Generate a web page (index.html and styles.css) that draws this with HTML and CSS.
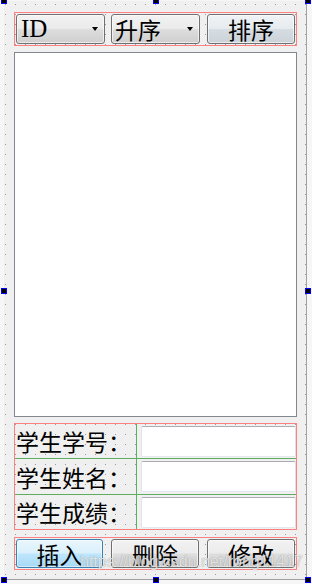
FILE: index.html
```html
<!DOCTYPE html>
<html lang="zh-CN">
<head>
    <meta charset="UTF-8">
    <meta name="viewport" content="width=device-width, initial-scale=1.0">
    <title>学生信息</title>
    <link rel="stylesheet" href="styles.css">
</head>
<body>
    <div class="form">
        <div class="layout toolbar">
            <div class="combo combo-id"><span>ID</span><i class="arrow"></i></div>
            <div class="combo combo-order"><span>升序</span><i class="arrow"></i></div>
            <button class="btn btn-sort">排序</button>
        </div>

        <div class="list"></div>

        <div class="layout grid">
            <div class="row">
                <label class="cell-label">学生学号：</label>
                <div class="cell-input"><input class="line-edit" type="text"></div>
            </div>
            <div class="row">
                <label class="cell-label">学生姓名：</label>
                <div class="cell-input"><input class="line-edit" type="text"></div>
            </div>
            <div class="row">
                <label class="cell-label">学生成绩：</label>
                <div class="cell-input"><input class="line-edit" type="text"></div>
            </div>
        </div>

        <div class="layout actions">
            <button class="btn btn-default">插入</button>
            <button class="btn btn-del">删除</button>
            <button class="btn btn-edit">修改</button>
        </div>

        <div class="watermark">https://blog.csdn.net/rong11417</div>

        <span class="handle h-tl"></span>
        <span class="handle h-tc"></span>
        <span class="handle h-tr"></span>
        <span class="handle h-ml"></span>
        <span class="handle h-mr"></span>
        <span class="handle h-bl"></span>
        <span class="handle h-bc"></span>
        <span class="handle h-br"></span>
    </div>
</body>
</html>
```

FILE: styles.css
```css
html, body{
    margin: 0;
    padding: 0;
}
body{
    width: 312px;
    height: 584px;
    overflow: hidden;
    background-color: #f6f6f6;
    font-family: "Noto Sans CJK SC", "Liberation Sans", sans-serif;
}
.form{
    position: relative;
    box-sizing: content-box;
    width: 292px;
    height: 567px;
    margin: 1px 0 0 4px;
    padding: 11px 0 0 10px;
    border-right: 1px solid #a0a0a0;
    border-bottom: 1px solid #a0a0a0;
    background-color: #f0f0f0;
    background-image:
        linear-gradient(90deg, #f0f0f0 9px, transparent 9px),
        linear-gradient(#f0f0f0 9px, #9a9a9a 9px);
    background-size: 10px 10px;
    background-position: 2px 4px;
}

/* layouts (red frames from designer) */
.layout{
    box-sizing: border-box;
    width: 283px;
    border: 1px solid #ff8080;
}
.toolbar{
    height: 34px;
    padding: 1px;
    display: flex;
    gap: 6px;
}
.actions{
    height: 33px;
    margin-top: 7px;
    padding: 1px;
    display: flex;
    gap: 8px;
}

/* combos and buttons */
.combo, .btn{
    box-sizing: border-box;
    height: 30px;
    border: 1px solid #707070;
    border-radius: 3px;
    background: linear-gradient(#f2f2f2 0%, #ebebeb 48%, #dddddd 52%, #cfcfcf 100%);
    font-size: 23px;
    color: #000;
    box-shadow: inset 0 0 0 1px rgba(255,255,255,0.6);
}
.combo{
    display: flex;
    align-items: center;
    padding-left: 3px;
    line-height: 26px;
}
.combo-id{
    width: 89px;
    padding-left: 4px;
    font-family: "Liberation Serif", serif;
    font-size: 25px;
}
.combo-order{
    width: 89px;
}
.arrow{
    margin-left: auto;
    margin-right: 6px;
    width: 0;
    height: 0;
    border-left: 3px solid transparent;
    border-right: 3px solid transparent;
    border-top: 4px solid #000;
}
.btn{
    padding: 0;
    font-family: "Noto Sans CJK SC", sans-serif;
    line-height: 26px;
    text-align: center;
}
.btn-sort{
    width: 88px;
    margin-left: 1px;
    background: linear-gradient(#f0f3f5 0%, #e6ebef 48%, #d6dde2 52%, #cbd3d9 100%);
}
.actions .btn{
    height: 29px;
}
.btn-default{
    width: 87px;
    border-color: #3c7fb1;
    background: linear-gradient(#eaf6fd 0%, #d9f0fc 48%, #bee6fd 52%, #a7d9f5 100%);
    box-shadow: inset 0 0 0 1px rgba(255,255,255,0.5);
}
.btn-del{
    width: 88px;
}
.btn-edit{
    width: 88px;
}

/* list widget */
.list{
    box-sizing: border-box;
    width: 283px;
    height: 365px;
    margin-top: 6px;
    border: 1px solid #828790;
    background: #fff;
}

/* form grid */
.grid{
    height: 107px;
    margin-top: 6px;
}
.row{
    display: flex;
    height: 35px;
    border-bottom: 1px solid #5fae5f;
}
.row:first-child{
    height: 34px;
}
.row:last-child{
    height: 34px;
    border-bottom: none;
}
.cell-label{
    width: 122px;
    border-right: 1px solid #5fae5f;
    padding-left: 1px;
    display: flex;
    align-items: center;
    font-size: 23px;
    white-space: nowrap;
    overflow: hidden;
}
.cell-input{
    flex: 1;
    display: flex;
    align-items: center;
    padding-left: 4px;
}
.line-edit{
    box-sizing: border-box;
    width: 155px;
    height: 31px;
    margin: 0;
    border: 1px solid;
    border-color: #abadb3 #dbdfe6 #e3e9ef #e2e3ea;
    border-radius: 2px;
    background: #fff;
    outline: none;
}

/* csdn watermark over the buttons */
.watermark{
    position: absolute;
    left: 76px;
    top: 551px;
    font-family: "Liberation Sans", sans-serif;
    font-size: 16px;
    line-height: 20px;
    color: rgba(255,255,255,0.75);
    text-shadow: 0 0 1px rgba(90,90,90,0.7);
    white-space: nowrap;
}

/* designer selection handles */
.handle{
    position: absolute;
    box-sizing: border-box;
    width: 6px;
    height: 6px;
    border: 1px solid #0000ff;
    background: #000;
}
.h-tl{ left: -3px; top: -3px; }
.h-tc{ left: 149px; top: -3px; }
.h-tr{ left: 301px; top: -3px; }
.h-ml{ left: -3px; top: 287px; }
.h-mr{ left: 301px; top: 287px; }
.h-bl{ left: -3px; top: 576px; }
.h-bc{ left: 149px; top: 576px; }
.h-br{ left: 301px; top: 576px; }
```
